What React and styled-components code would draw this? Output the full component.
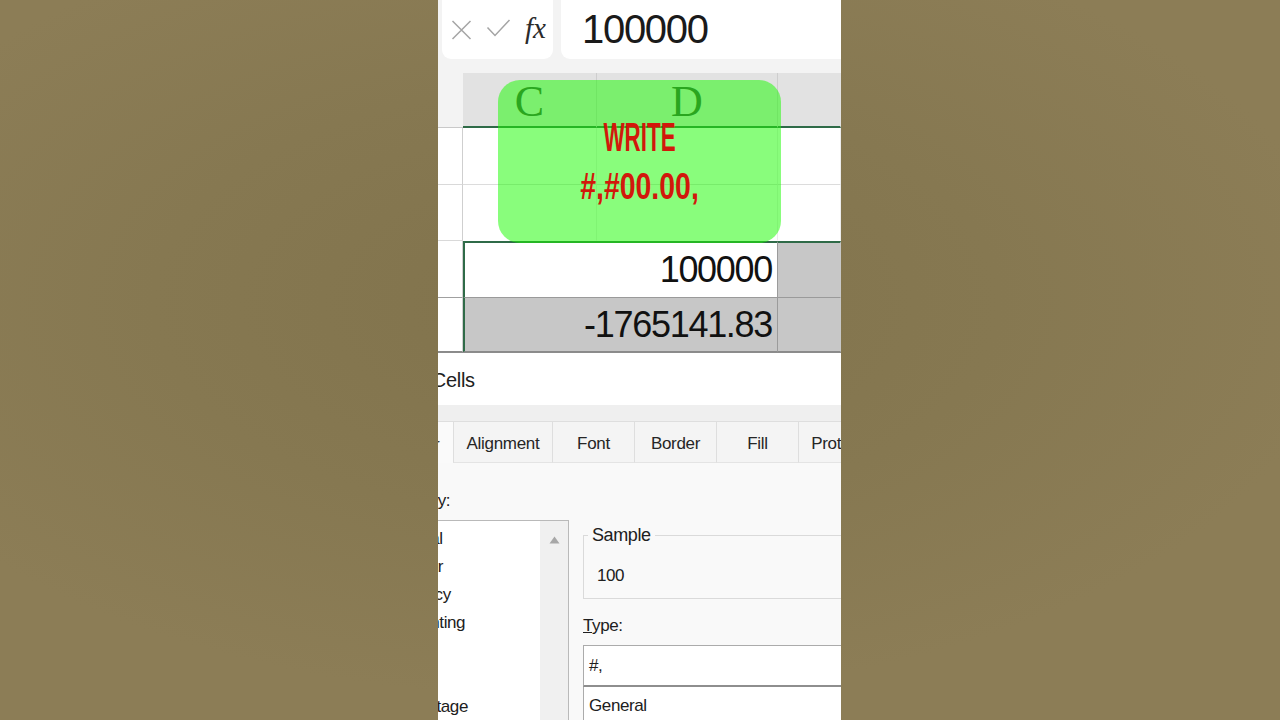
import React from 'react';
import styled, { createGlobalStyle } from 'styled-components';

const GlobalStyle = createGlobalStyle`
  * { box-sizing: border-box; }
  html, body { margin: 0; padding: 0; }
  body { font-family: "Liberation Sans", Arial, sans-serif; }
`;

const Page = styled.div`
  width: 1280px;
  height: 720px;
  overflow: hidden;
  padding-left: 438px;
  background: radial-gradient(ellipse 60% 55% at 45% 42%, #81734c 0%, #867851 55%, #8c7d56 100%);
`;

const Strip = styled.div`
  width: 403px;
  height: 720px;
  overflow: hidden;
  background: #f3f3f3;
  display: flex;
  flex-direction: column;
`;

/* formula bar */
const FormulaBar = styled.div`
  height: 73px;
  flex-shrink: 0;
  display: flex;
  gap: 8px;
  padding: 0 0 14px 4px;
`;

const ActionBox = styled.div`
  width: 111px;
  background: #fff;
  border-radius: 0 0 9px 9px;
  display: flex;
  align-items: center;
  gap: 14px;
  padding-left: 9px;
`;

const Fx = styled.span`
  font-family: "Liberation Serif", serif;
  font-style: italic;
  font-size: 29px;
  color: #2b2b2b;
  margin-top: -2px;
`;

const FormulaInput = styled.div`
  flex: 1;
  background: #fff;
  border-radius: 0 0 0 9px;
  display: flex;
  align-items: center;
  padding-left: 21px;
  font-size: 40px;
  letter-spacing: -1.3px;
  color: #1a1a1a;
`;

/* sheet */
const Sheet = styled.div`
  position: relative;
  flex-shrink: 0;
  display: grid;
  grid-template-columns: 25px 134px 181px 63px;
  grid-template-rows: 55px 57px 56px 57px 54px;
  background: #fff;
`;

const Corner = styled.div`
  background: #f3f3f3;
  border-bottom: 1px solid #c9c9c9;
`;

const ColHead = styled.div`
  background: #e2e2e2;
  border-right: 1px solid ${p => (p.$last ? 'transparent' : '#cecece')};
  border-bottom: 2px solid #2f6b48;
  display: flex;
  align-items: center;
  justify-content: center;
  padding-top: 4px;
  font-family: "Liberation Serif", serif;
  font-size: 44px;
  color: #3a4a3e;
`;

const RowHead = styled.div`
  background: #fff;
  border-right: 1px solid #cfcfcf;
  border-bottom: 1px solid ${p => p.$line || '#d9d9d9'};
`;

const Cell = styled.div`
  grid-column: span ${p => p.$span || 1};
  background: ${p => (p.$shade ? '#c7c7c7' : '#fff')};
  border-right: 1px solid ${p => p.$divider || '#ececec'};
  border-bottom: 1px solid ${p => p.$line || '#dcdcdc'};
  border-top: ${p => (p.$selTop ? '2px solid #2f6b48' : 'none')};
  border-left: ${p => (p.$selLeft ? '2px solid #2f6b48' : 'none')};
  display: flex;
  align-items: center;
  justify-content: flex-end;
  padding-right: 5px;
  font-size: 36px;
  letter-spacing: -1.3px;
  color: #111;
`;

const Callout = styled.div`
  position: absolute;
  left: 60px;
  top: 7px;
  width: 283px;
  height: 163px;
  border-radius: 22px;
  background: rgba(28, 251, 3, 0.52);
  display: flex;
  flex-direction: column;
  justify-content: center;
  color: #d2180b;
  font-weight: 700;
  text-align: center;
`;

const CalloutLine = styled.span`
  display: block;
  line-height: 50px;
  font-size: ${p => p.$size}px;
  transform: scaleX(${p => p.$squeeze});
`;

/* dialog */
const Dialog = styled.div`
  flex: 1;
  width: 483px;
  margin-left: -80px;
  background: #f9f9f9;
  display: flex;
  flex-direction: column;
  color: #202020;
`;

const TitleBar = styled.div`
  height: 53px;
  flex-shrink: 0;
  background: #fff;
  border-top: 1px solid #8c8c8c;
  display: flex;
  align-items: center;
  padding: 2px 0 0 7px;
  font-size: 20px;
  letter-spacing: -0.3px;
`;

const TabStrip = styled.div`
  height: 58px;
  flex-shrink: 0;
  background: #efefef;
  display: flex;
  align-items: flex-end;
  padding: 16px 0 0 9px;
`;

const Tab = styled.div`
  width: ${p => p.$w}px;
  height: 42px;
  flex-shrink: 0;
  margin-left: -1px;
  display: flex;
  align-items: center;
  justify-content: center;
  padding-top: 4px;
  background: ${p => (p.$active ? '#fafafa' : '#f4f4f4')};
  border: 1px solid #dedede;
  border-bottom: ${p => (p.$active ? 'none' : '1px solid #e4e4e4')};
  font-size: 17px;
  letter-spacing: -0.3px;
  color: #262626;
`;

const Body = styled.div`
  flex: 1;
  display: flex;
  padding-left: 22px;
  font-size: 17px;
  letter-spacing: -0.4px;
`;

const LeftCol = styled.div`
  width: 189px;
  flex-shrink: 0;
  display: flex;
  flex-direction: column;
`;

const Label = styled.div`
  line-height: 22px;
  margin-top: ${p => p.$top}px;
`;

const ListBox = styled.div`
  flex: 1;
  margin-top: 8px;
  display: flex;
  background: #fff;
  border: 1px solid #b9b9b9;
  border-bottom: none;
`;

const Items = styled.div`
  flex: 1;
  padding: 4px 0 0 4px;
`;

const Item = styled.div`
  line-height: 28px;
  white-space: nowrap;
`;

const ScrollTrack = styled.div`
  width: 28px;
  background: #f0f0f0;
  display: flex;
  justify-content: center;
  padding-top: 15px;
`;

const RightCol = styled.div`
  width: 300px;
  flex-shrink: 0;
  margin-left: 14px;
  display: flex;
  flex-direction: column;
`;

const SampleBox = styled.fieldset`
  margin: 61px 0 0;
  padding: 0 0 11px 13px;
  border: 1px solid #dadada;
  min-width: 0;
`;

const Legend = styled.legend`
  margin-left: -9px;
  padding: 0 4px;
  line-height: 22px;
  font-size: 18px;
`;

const SampleValue = styled.div`
  margin-top: 19px;
  line-height: 22px;
`;

const TypeInput = styled.div`
  height: 42px;
  margin-top: 8px;
  background: #fff;
  border: 1px solid #ababab;
  border-bottom: 2px solid #8e8e8e;
  display: flex;
  align-items: center;
  padding-left: 5px;
`;

const TypeList = styled.div`
  flex: 1;
  background: #fff;
  border-left: 1px solid #ababab;
  padding: 6px 0 0 5px;
  line-height: 26px;
`;

const CrossIcon = () => (
  <svg width="21" height="22" viewBox="0 0 21 22">
    <path d="M1.5 2 L19.5 20 M19.5 2 L1.5 20" stroke="#a4a4a4" strokeWidth="1.5" fill="none" />
  </svg>
);

const CheckIcon = () => (
  <svg width="25" height="20" viewBox="0 0 25 20" style={{ marginTop: -3 }}>
    <path d="M1.5 9.5 L9 17.5 L23.5 2" stroke="#a4a4a4" strokeWidth="1.5" fill="none" />
  </svg>
);

const UpArrow = () => (
  <svg width="11" height="8" viewBox="0 0 11 8">
    <path d="M5.5 0.5 L10.5 7.5 L0.5 7.5 Z" fill="#a7a7a7" />
  </svg>
);

const tabs = [
  { name: 'Number', w: 88, active: true },
  { name: 'Alignment', w: 100 },
  { name: 'Font', w: 83 },
  { name: 'Border', w: 83 },
  { name: 'Fill', w: 83 },
  { name: 'Protection', w: 100 },
];

const categories = ['General', 'Number', 'Currency', 'Accounting', 'Date', 'Time', 'Percentage'];

export default function App() {
  return (
    <>
      <GlobalStyle />
      <Page>
        <Strip>
          <FormulaBar>
            <ActionBox>
              <CrossIcon />
              <CheckIcon />
              <Fx>fx</Fx>
            </ActionBox>
            <FormulaInput>100000</FormulaInput>
          </FormulaBar>

          <Sheet>
            <Corner />
            <ColHead>C</ColHead>
            <ColHead>D</ColHead>
            <ColHead $last />

            <RowHead />
            <Cell />
            <Cell />
            <Cell />

            <RowHead />
            <Cell $line="transparent" />
            <Cell $line="transparent" />
            <Cell $line="transparent" />

            <RowHead $line="#a0a0a0" />
            <Cell $span={2} $selTop $selLeft $divider="#9b9b9b" $line="#9a9a9a">100000</Cell>
            <Cell $shade $selTop $divider="transparent" $line="#9a9a9a" />

            <RowHead $line="#8a8a8a" />
            <Cell $span={2} $shade $selLeft $divider="#9b9b9b" $line="#8a8a8a">-1765141.83</Cell>
            <Cell $shade $divider="transparent" $line="#8a8a8a" />

            <Callout>
              <CalloutLine $size={40} $squeeze={0.56}>WRITE</CalloutLine>
              <CalloutLine $size={36} $squeeze={0.79}>#,#00.00,</CalloutLine>
            </Callout>
          </Sheet>

          <Dialog>
            <TitleBar>Format Cells</TitleBar>
            <TabStrip>
              {tabs.map(t => (
                <Tab key={t.name} $w={t.w} $active={t.active}>{t.name}</Tab>
              ))}
            </TabStrip>
            <Body>
              <LeftCol>
                <Label $top={27}>Category:</Label>
                <ListBox>
                  <Items>
                    {categories.map(c => <Item key={c}>{c}</Item>)}
                  </Items>
                  <ScrollTrack>
                    <UpArrow />
                  </ScrollTrack>
                </ListBox>
              </LeftCol>
              <RightCol>
                <SampleBox>
                  <Legend>Sample</Legend>
                  <SampleValue>100</SampleValue>
                </SampleBox>
                <Label $top={16}><u>T</u>ype:</Label>
                <TypeInput>#,</TypeInput>
                <TypeList>General</TypeList>
              </RightCol>
            </Body>
          </Dialog>
        </Strip>
      </Page>
    </>
  );
}
